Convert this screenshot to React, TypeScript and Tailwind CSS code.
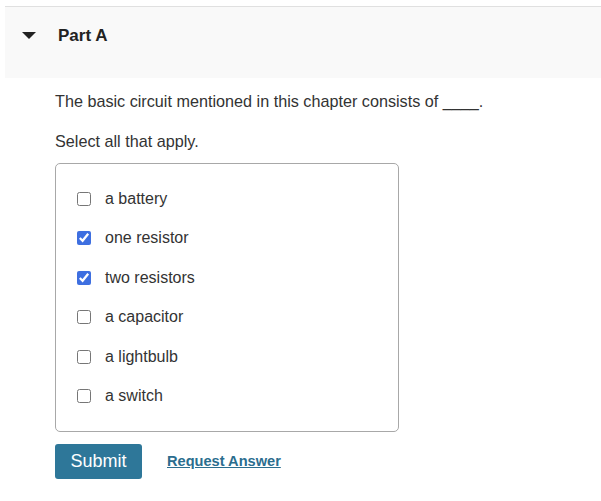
import { useState } from "react";

const options = [
  { label: "a battery", checked: false },
  { label: "one resistor", checked: true },
  { label: "two resistors", checked: true },
  { label: "a capacitor", checked: false },
  { label: "a lightbulb", checked: false },
  { label: "a switch", checked: false },
];

export default function App() {
  const [selected, setSelected] = useState(options.map((o) => o.checked));

  return (
    <div className="min-h-[501px] bg-white pt-[6px] pl-[5px] font-['Liberation_Sans',Arial,sans-serif] text-[#333]">
      {/* Part header */}
      <div className="h-[72px] border-t border-[#e0e0e0] bg-[#f9f9f9] pt-[19px] pl-[17px]">
        <div className="flex h-[20px] items-center">
          <svg width="14" height="8" viewBox="0 0 14 8" className="mr-[22px]">
            <polygon points="0,0 14,0 7,7" fill="#222" />
          </svg>
          <span className="text-[17px] leading-[20px] font-bold text-[#222]">Part A</span>
        </div>
      </div>

      <div className="pl-[50px]">
        <p className="mt-[13px] text-[16.2px] leading-[20px]">
          The basic circuit mentioned in this chapter consists of ____.
        </p>
        <p className="mt-[20px] text-[16.2px] leading-[20px]">Select all that apply.</p>

        <div className="mt-[12px] w-[344px] rounded-[5px] border border-[#a8a8a8] pt-[15px] pb-[15px] pl-[21px]">
          {options.map((o, i) => (
            <label key={o.label} className="flex h-[39.5px] items-center">
              <input
                type="checkbox"
                checked={selected[i]}
                onChange={() =>
                  setSelected((s) => s.map((v, j) => (j === i ? !v : v)))
                }
                className="m-0 h-[14px] w-[14px] accent-[#3e6fe0]"
              />
              <span className="ml-[14px] text-[16px] leading-[20px]">{o.label}</span>
            </label>
          ))}
        </div>

        <div className="mt-[12px] flex items-center">
          <button className="h-[35px] w-[87px] rounded-[3px] bg-[#2e7799] text-[18px] text-white">
            Submit
          </button>
          <a href="#" className="ml-[25px] text-[14.6px] font-bold text-[#2b6d8e] underline">
            Request Answer
          </a>
        </div>
      </div>
    </div>
  );
}
